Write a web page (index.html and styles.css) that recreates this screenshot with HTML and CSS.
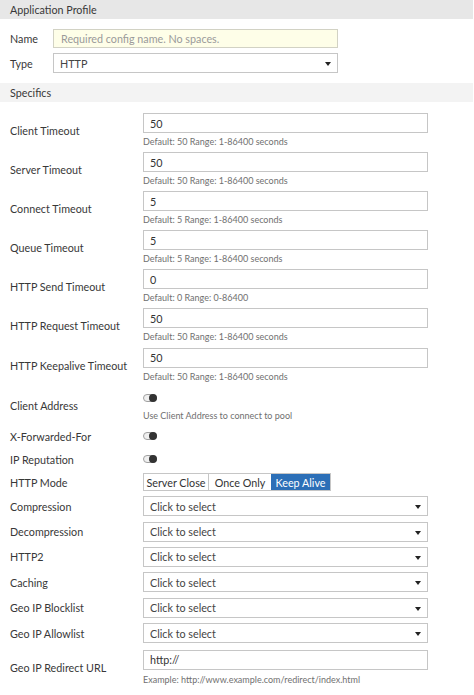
FILE: index.html
```html
<!DOCTYPE html>
<html>
<head>
<meta charset="utf-8">
<link rel="stylesheet" href="styles.css">
</head>
<body>
<div class="page">
  <div class="band band-main">Application Profile</div>
  <div class="top">
    <div class="trow">
      <div class="tlabel">Name</div>
      <div class="field field-name"><span class="ph">Required config name. No spaces.</span></div>
    </div>
    <div class="trow">
      <div class="tlabel">Type</div>
      <div class="field field-select"><span>HTTP</span><span class="caret"></span></div>
    </div>
  </div>
  <div class="band band-sub">Specifics</div>
  <div class="rows">
    <div class="row r-input">
      <div class="label">Client Timeout</div>
      <div class="ctl"><div class="field">50</div><div class="help">Default: 50 Range: 1-86400 seconds</div></div>
    </div>
    <div class="row r-input">
      <div class="label">Server Timeout</div>
      <div class="ctl"><div class="field">50</div><div class="help">Default: 50 Range: 1-86400 seconds</div></div>
    </div>
    <div class="row r-input">
      <div class="label">Connect Timeout</div>
      <div class="ctl"><div class="field">5</div><div class="help">Default: 5 Range: 1-86400 seconds</div></div>
    </div>
    <div class="row r-input">
      <div class="label">Queue Timeout</div>
      <div class="ctl"><div class="field">5</div><div class="help">Default: 5 Range: 1-86400 seconds</div></div>
    </div>
    <div class="row r-input">
      <div class="label">HTTP Send Timeout</div>
      <div class="ctl"><div class="field">0</div><div class="help">Default: 0 Range: 0-86400</div></div>
    </div>
    <div class="row r-input">
      <div class="label">HTTP Request Timeout</div>
      <div class="ctl"><div class="field">50</div><div class="help">Default: 50 Range: 1-86400 seconds</div></div>
    </div>
    <div class="row r-input">
      <div class="label">HTTP Keepalive Timeout</div>
      <div class="ctl"><div class="field">50</div><div class="help">Default: 50 Range: 1-86400 seconds</div></div>
    </div>
    <div class="row r-client">
      <div class="label">Client Address</div>
      <div class="ctl">
        <div class="tog-wrap"><span class="toggle"><span class="knob"></span></span></div>
        <div class="help help-client">Use Client Address to connect to pool</div>
      </div>
    </div>
    <div class="row r-toggle">
      <div class="label">X-Forwarded-For</div>
      <div class="ctl"><div class="tog-wrap"><span class="toggle"><span class="knob"></span></span></div></div>
    </div>
    <div class="row r-toggle r-iprep">
      <div class="label">IP Reputation</div>
      <div class="ctl"><div class="tog-wrap"><span class="toggle"><span class="knob"></span></span></div></div>
    </div>
    <div class="row r-mode">
      <div class="label">HTTP Mode</div>
      <div class="ctl">
        <div class="seg">
          <span class="seg-item seg-sc">Server Close</span><span class="seg-item seg-oo">Once Only</span><span class="seg-item seg-ka active">Keep Alive</span>
        </div>
      </div>
    </div>
    <div class="row r-select">
      <div class="label">Compression</div>
      <div class="ctl"><div class="field field-select"><span>Click to select</span><span class="caret"></span></div></div>
    </div>
    <div class="row r-select">
      <div class="label">Decompression</div>
      <div class="ctl"><div class="field field-select"><span>Click to select</span><span class="caret"></span></div></div>
    </div>
    <div class="row r-select">
      <div class="label">HTTP2</div>
      <div class="ctl"><div class="field field-select"><span>Click to select</span><span class="caret"></span></div></div>
    </div>
    <div class="row r-select">
      <div class="label">Caching</div>
      <div class="ctl"><div class="field field-select"><span>Click to select</span><span class="caret"></span></div></div>
    </div>
    <div class="row r-select">
      <div class="label">Geo IP Blocklist</div>
      <div class="ctl"><div class="field field-select"><span>Click to select</span><span class="caret"></span></div></div>
    </div>
    <div class="row r-select">
      <div class="label">Geo IP Allowlist</div>
      <div class="ctl"><div class="field field-select"><span>Click to select</span><span class="caret"></span></div></div>
    </div>
    <div class="row r-input r-url">
      <div class="label">Geo IP Redirect URL</div>
      <div class="ctl"><div class="field">http://</div><div class="help help-url">Example: http://www.example.com/redirect/index.html</div></div>
    </div>
  </div>
</div>
</body>
</html>
```
FILE: styles.css
```css
* { box-sizing: border-box; }
html, body { margin: 0; padding: 0; background: #fff; }
body {
  font-family: Lato, "Open Sans", "Liberation Sans", sans-serif;
  font-size: 10.75px;
  color: #383838;
}
.page { width: 473px; }
.band {
  height: 19px;
  line-height: 19px;
  padding-left: 10px;
  font-size: 10.75px;
  color: #383838;
}
.band-main { background: #e7e7e7; }
.band-sub { background: #f3f3f3; margin-top: 10px; }

.top { padding-top: 10px; display: flex; flex-direction: column; gap: 5px; }
.trow { display: flex; align-items: center; }
.tlabel { width: 53px; padding-left: 10px; }

.field {
  width: 285px;
  height: 20px;
  border: 1px solid #c6c6c6;
  background: #fff;
  padding: 0 6px;
  display: flex;
  align-items: center;
  font-size: 10.75px;
  color: #333;
}
.field-name { height: 19px; background: #fefee8; border-color: #d2d2c4; padding-left: 7px; }
.ph { color: #9a9a9a; }
.field-select { justify-content: space-between; color: #444; }
.caret {
  width: 0; height: 0;
  border-left: 3.5px solid transparent;
  border-right: 3.5px solid transparent;
  border-top: 4px solid #222;
  margin-top: 2px;
}

.rows { padding-top: 11px; display: flex; flex-direction: column; }
.row { display: flex; align-items: center; }
.label { width: 143px; padding-left: 10px; color: #383838; }
.ctl { display: flex; flex-direction: column; }
.help {
  font-size: 9px;
  line-height: 12px;
  color: #707070;
  margin-top: 3px;
}
.r-input { margin-bottom: 4.1px; }
.r-url { margin-top: 1px; }
.help-url { margin-top: 4px; }

.r-client { margin-top: 1.5px; }
.tog-wrap { height: 20px; display: flex; align-items: center; }
.toggle {
  position: relative;
  display: inline-block;
  width: 14px;
  height: 8.5px;
  border-radius: 5px;
  background: #f0f0f0;
  border: 1px solid #a0a0a0;
}
.knob {
  position: absolute;
  right: -1px;
  top: -1px;
  width: 8.5px;
  height: 8.5px;
  border-radius: 50%;
  background: #333;
}
.help-client { margin-top: 2px; }
.r-toggle { margin-top: 4px; }
.r-iprep { margin-top: 3px; }

.r-mode { margin-top: 4px; }
.seg { display: flex; height: 18px; border: 1px solid #c6c6c6; width: 188px; }
.seg-item {
  display: flex;
  align-items: center;
  justify-content: center;
  font-size: 10.75px;
  color: #333;
  background: #fff;
}
.seg-sc { width: 65px; border-right: 1px solid #c6c6c6; }
.seg-oo { width: 62px; }
.seg-ka { flex: 1; }
.seg-item.active { background: #2c6fb7; color: #fff; }

.r-mode { margin-bottom: 5px; }
.r-select { margin-bottom: 5.4px; }
```
